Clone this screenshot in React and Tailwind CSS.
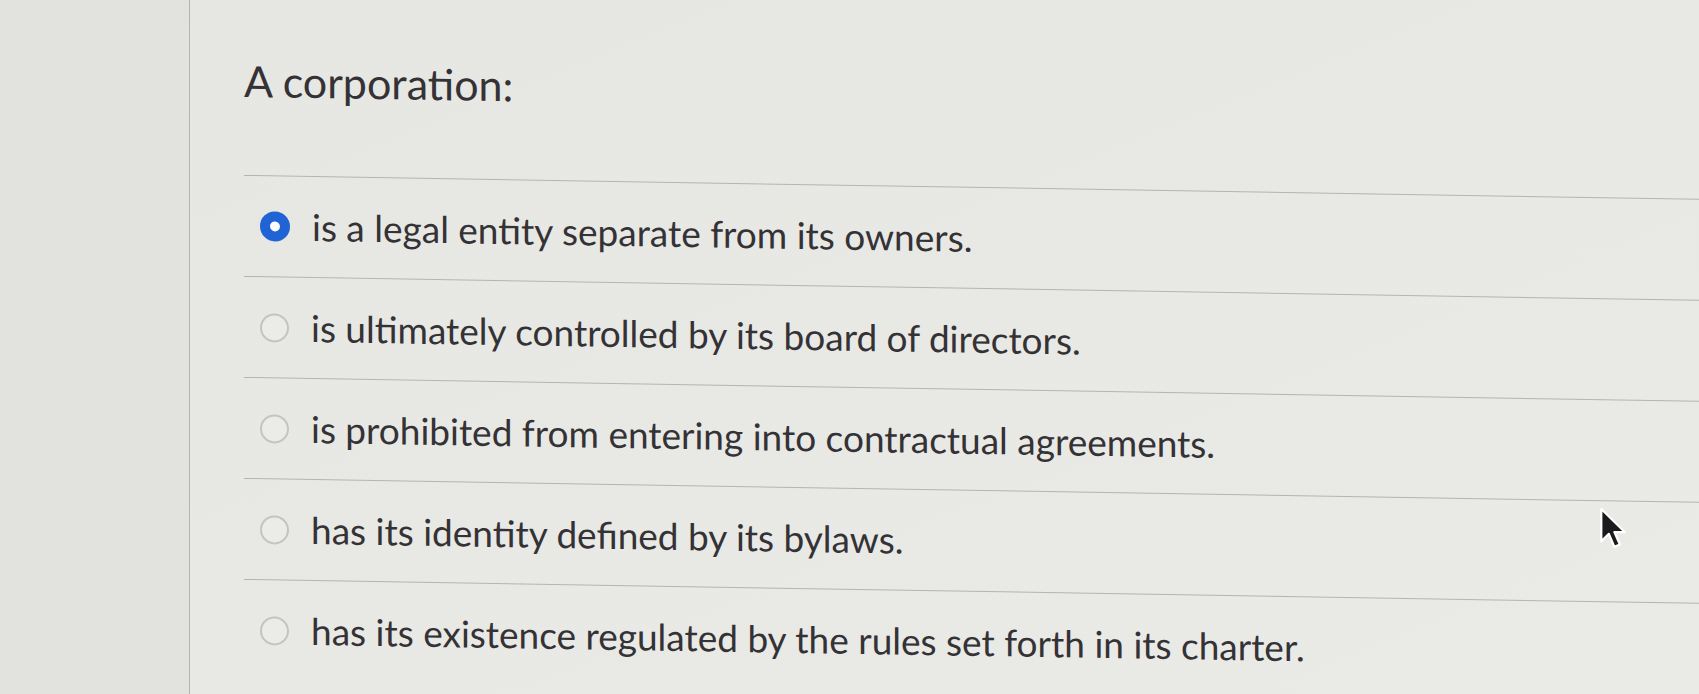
import React from 'react'

const options = [
  'is a legal entity separate from its owners.',
  'is ultimately controlled by its board of directors.',
  'is prohibited from entering into contractual agreements.',
  'has its identity defined by its bylaws.',
  'has its existence regulated by the rules set forth in its charter.',
]

function Radio({ checked }) {
  if (checked) {
    return <span className="block w-[30px] h-[30px] shrink-0 rounded-full border-[10px] border-[#1f63d4] bg-white" />
  }
  return <span className="block w-[29px] h-[29px] shrink-0 rounded-full border-2 border-[#c4c4c1] bg-[#ebebe8]" />
}

function Cursor() {
  return (
    <svg className="absolute left-[1599px] top-[507px]" width="28" height="44" viewBox="0 0 20 32">
      <path
        d="M1.5 1.5 L1.5 25 L7 19.5 L11 29 L15 27.3 L11 18.2 L18.5 18.2 Z"
        fill="#1b1b1d"
        stroke="#ffffff"
        strokeWidth="1.6"
        strokeLinejoin="round"
      />
    </svg>
  )
}

export default function App() {
  const selected = 0

  return (
    <div className="relative flex w-[1699px] h-[694px] overflow-hidden bg-gradient-to-br from-[#e6e6e3] to-[#eaeae7] text-[#343235] font-['Lato','Liberation_Sans',sans-serif]">
      {/* left nav column */}
      <aside className="w-[190px] shrink-0 bg-[#e2e2df] border-r border-[#b3b3b0]" />

      <main className="flex-1">
        <div className="w-[1560px] pl-[54px] skew-y-[0.94deg] origin-top-left">
          <h1 className="mt-[58px] text-[43px] leading-none font-normal">A corporation:</h1>

          <div className="mt-[73px]">
            {options.map((text, i) => (
              <label
                key={i}
                className="flex items-center gap-[22px] h-[101px] pl-[16px] border-t border-[#b4b4b1]"
              >
                <Radio checked={i === selected} />
                <span className="text-[37px]">{text}</span>
              </label>
            ))}
          </div>
        </div>
      </main>

      <Cursor />
    </div>
  )
}
